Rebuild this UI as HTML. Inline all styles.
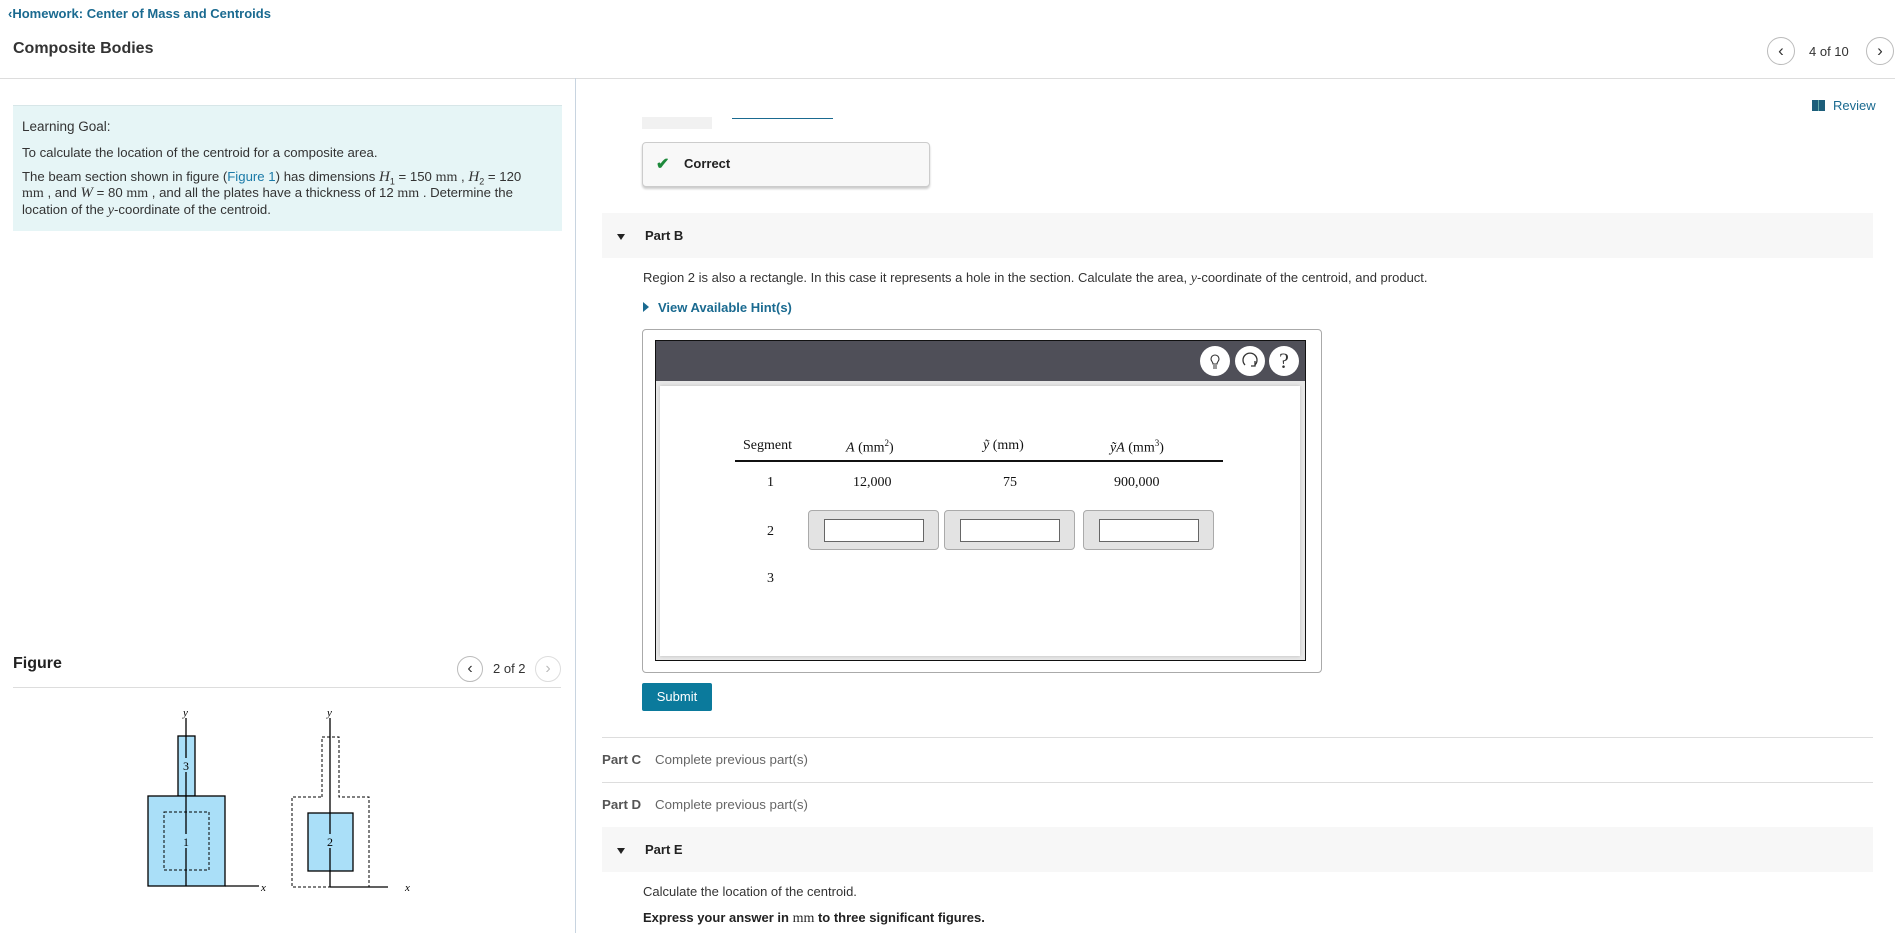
<!DOCTYPE html>
<html><head><meta charset="utf-8"><style>
*{margin:0;padding:0;box-sizing:border-box}
body{width:1895px;height:933px;position:relative;overflow:hidden;background:#fff;font-family:"Liberation Sans",Arial,sans-serif;font-size:13px;color:#333}
.a{position:absolute;white-space:nowrap}
.m{font-family:"Liberation Serif",serif;font-style:italic}
.mr{font-family:"Liberation Serif",serif}
.circ{position:absolute;border:1px solid #bbb;border-radius:50%;background:#fff;color:#333;text-align:center}
.bar{position:absolute;left:602px;width:1271px;height:45px;background:#f7f7f7}
.tri{position:absolute;width:0;height:0;border-left:4px solid transparent;border-right:4px solid transparent;border-top:6px solid #222}
.hr{position:absolute;height:1px;background:#ddd}
.tb{position:absolute;font-family:"Liberation Serif",serif;font-size:14px;color:#111}
.ib{position:absolute;top:510px;width:131px;height:40px;background:#e3e3e3;border:1px solid #aaa;border-radius:4px}
.ib i{position:absolute;left:15px;top:8px;width:100px;height:23px;background:#fff;border:1px solid #666}
</style></head><body>

<div class="a" style="left:8px;top:6px;font-size:13px;font-weight:bold;color:#1a6a90">&#x2039;Homework: Center of Mass and Centroids</div>
<div class="a" style="left:13px;top:40px;font-size:16px;font-weight:bold;color:#333">Composite Bodies</div>

<div class="circ" style="left:1767px;top:37px;width:28px;height:28px;line-height:25px;font-size:17px">&#x2039;</div>
<div class="a" style="left:1809px;top:44px;font-size:13px">4 of 10</div>
<div class="circ" style="left:1866px;top:37px;width:28px;height:28px;line-height:25px;font-size:17px">&#x203A;</div>
<div class="hr" style="left:0;top:78px;width:1895px"></div>
<div style="position:absolute;left:575px;top:78px;width:1px;height:855px;background:#c8d4e0"></div>

<!-- learning goal -->
<div style="position:absolute;left:13px;top:105px;width:549px;height:126px;background:#e6f5f6;border-top:1px solid #d7e6e8"></div>
<div class="a" style="left:22px;top:119px;font-size:13.5px">Learning Goal:</div>
<div class="a" style="left:22px;top:145px;font-size:13.2px">To calculate the location of the centroid for a composite area.</div>
<div class="a" style="left:22px;top:169px;font-size:13.2px">The beam section shown in figure (<span style="color:#1a7aa8">Figure 1</span>) has dimensions <span class="m" style="font-size:15px">H</span><sub style="font-size:9px">1</sub> = 150 <span class="mr" style="font-size:14px">mm</span> , <span class="m" style="font-size:15px">H</span><sub style="font-size:9px">2</sub> = 120</div>
<div class="a" style="left:22px;top:185px;font-size:13.2px"><span class="mr" style="font-size:14px">mm</span> , and <span class="m" style="font-size:15px">W</span> = 80 <span class="mr" style="font-size:14px">mm</span> , and all the plates have a thickness of 12 <span class="mr" style="font-size:14px">mm</span> . Determine the</div>
<div class="a" style="left:22px;top:202px;font-size:13.2px">location of the <span class="m" style="font-size:14px">y</span>-coordinate of the centroid.</div>

<!-- figure -->
<div class="a" style="left:13px;top:655px;font-size:16px;font-weight:bold;color:#222">Figure</div>
<div class="circ" style="left:457px;top:656px;width:26px;height:26px;line-height:23px;font-size:16px">&#x2039;</div>
<div class="a" style="left:493px;top:661px;font-size:13px">2 of 2</div>
<div class="circ" style="left:535px;top:656px;width:26px;height:26px;line-height:23px;font-size:16px;color:#bbb;border-color:#ddd">&#x203A;</div>
<div class="hr" style="left:13px;top:687px;width:548px"></div>
<svg style="position:absolute;left:0;top:700px" width="450" height="200" viewBox="0 700 450 200">
 <g stroke="#000" stroke-width="1.3" fill="#aadff8">
  <rect x="178" y="736" width="17" height="60"/>
  <rect x="148" y="796" width="77" height="90"/>
  <rect x="308" y="813" width="45" height="58"/>
 </g>
 <g stroke="#000" stroke-width="1" fill="none" stroke-dasharray="3,2">
  <rect x="164" y="812" width="45" height="58"/>
  <path d="M322 797 V737 H339 V797 H369 V887 H292 V797 Z"/>
 </g>
 <g stroke="#000" stroke-width="1.3">
  <line x1="186" y1="718" x2="186" y2="886"/>
  <line x1="225" y1="886" x2="259" y2="886"/>
  <line x1="330" y1="718" x2="330" y2="887"/>
  <line x1="330" y1="887" x2="388" y2="887"/>
 </g>
 <g fill="#aadff8">
  <rect x="181" y="758" width="10" height="14"/>
  <rect x="181" y="834" width="10" height="14"/>
  <rect x="325" y="834" width="10" height="14"/>
 </g>
 <g font-family="Liberation Serif,serif" font-size="12" fill="#000">
  <text x="183" y="716" font-style="italic" font-size="11">y</text>
  <text x="327" y="716" font-style="italic" font-size="11">y</text>
  <text x="261" y="891" font-style="italic" font-size="11">x</text>
  <text x="405" y="891" font-style="italic" font-size="11">x</text>
  <text x="183" y="770">3</text>
  <text x="183" y="846">1</text>
  <text x="327" y="846">2</text>
 </g>
</svg>

<!-- right -->
<div class="a" style="left:1812px;top:100px;width:13px;height:11px;background:#1d5e7a;border-left:6px solid #1d5e7a;box-shadow:inset 1px 0 0 #6aa"></div>
<div class="a" style="left:1833px;top:98px;color:#1a6a90">Review</div>

<div style="position:absolute;left:642px;top:117px;width:70px;height:12px;background:#f1f1f1"></div>
<div style="position:absolute;left:732px;top:118px;width:101px;height:1px;background:#1a6a90"></div>
<div style="position:absolute;left:642px;top:142px;width:288px;height:45px;background:#f8f8f8;border:1px solid #ccc;border-radius:4px;box-shadow:0 2px 2px #ccc"></div>
<div class="a" style="left:656px;top:154px;color:#1e8a3c;font-size:16px;font-weight:bold">&#x2714;</div>
<div class="a" style="left:684px;top:156px;font-weight:bold;color:#222">Correct</div>

<div class="bar" style="top:213px"></div>
<div class="tri" style="left:617px;top:234px"></div>
<div class="a" style="left:645px;top:228px;font-weight:bold;color:#222">Part B</div>
<div class="a" style="left:643px;top:270px;font-size:13px">Region 2 is also a rectangle. In this case it represents a hole in the section. Calculate the area, <span class="m" style="font-size:14px">y</span>-coordinate of the centroid, and product.</div>
<div class="a" style="left:643px;top:302px;width:0;height:0;border-top:5px solid transparent;border-bottom:5px solid transparent;border-left:6px solid #1a6a90"></div>
<div class="a" style="left:658px;top:300px;font-weight:bold;color:#1a6a90">View Available Hint(s)</div>

<!-- applet -->
<div style="position:absolute;left:642px;top:329px;width:680px;height:344px;border:1px solid #aaa;border-radius:4px;background:#fff"></div>
<div style="position:absolute;left:655px;top:340px;width:651px;height:321px;border:1.5px solid #111;background:#e6e6e6"></div>
<div style="position:absolute;left:656px;top:341px;width:649px;height:40px;background:#4f4f58"></div>
<div style="position:absolute;left:660px;top:386px;width:640px;height:270px;background:#fff;box-shadow:0 0 3px #bbb"></div>
<div class="circ" style="left:1235px;top:346px;width:30px;height:30px;border:none"><svg width="30" height="30"><path d="M10 19 A7 7 0 1 1 20 19" fill="none" stroke="#333" stroke-width="1.3"/><path d="M20 15 l0 5 l-4 0" fill="none" stroke="#333" stroke-width="1.3"/></svg></div>
<div class="circ" style="left:1269px;top:346px;width:30px;height:30px;border:none;font-size:22px;line-height:30px;font-family:'Liberation Serif',serif">?</div>
<div class="circ" style="left:1200px;top:346px;width:30px;height:30px;border:none;background:#fff"><svg width="30" height="30"><path d="M11 13 a4 4 0 1 1 8 0 c0 2-2 3-2 5 h-4 c0-2-2-3-2-5z M13 20 h4 M13 22 h4" fill="none" stroke="#333" stroke-width="1.1"/></svg></div>

<div class="tb" style="left:743px;top:438px">Segment</div>
<div class="tb" style="left:846px;top:438px"><i>A</i> (mm<sup style="font-size:9px">2</sup>)</div>
<div class="tb" style="left:983px;top:438px"><i>ỹ</i> (mm)</div>
<div class="tb" style="left:1110px;top:438px"><i>ỹA</i> (mm<sup style="font-size:9px">3</sup>)</div>
<div style="position:absolute;left:735px;top:460px;width:488px;height:1.5px;background:#111"></div>
<div class="tb" style="left:767px;top:475px">1</div>
<div class="tb" style="left:853px;top:475px">12,000</div>
<div class="tb" style="left:1003px;top:475px">75</div>
<div class="tb" style="left:1114px;top:475px">900,000</div>
<div class="tb" style="left:767px;top:524px">2</div>
<div class="tb" style="left:767px;top:571px">3</div>
<div class="ib" style="left:808px"><i></i></div>
<div class="ib" style="left:944px"><i></i></div>
<div class="ib" style="left:1083px"><i></i></div>

<div style="position:absolute;left:642px;top:683px;width:70px;height:28px;background:#0b7a9c;border-radius:2px;color:#fff;text-align:center;line-height:28px">Submit</div>

<div class="hr" style="left:602px;top:737px;width:1271px"></div>
<div class="a" style="left:602px;top:752px;font-weight:bold;color:#555;font-size:13.3px">Part C</div>
<div class="a" style="left:655px;top:752px;color:#666;font-size:13.3px">Complete previous part(s)</div>
<div class="hr" style="left:602px;top:782px;width:1271px"></div>
<div class="a" style="left:602px;top:797px;font-weight:bold;color:#555;font-size:13.3px">Part D</div>
<div class="a" style="left:655px;top:797px;color:#666;font-size:13.3px">Complete previous part(s)</div>
<div class="bar" style="top:827px"></div>
<div class="tri" style="left:617px;top:848px"></div>
<div class="a" style="left:645px;top:842px;font-weight:bold;color:#222">Part E</div>
<div class="a" style="left:643px;top:884px;font-size:13px">Calculate the location of the centroid.</div>
<div class="a" style="left:643px;top:910px;font-size:13px;font-weight:bold;color:#222">Express your answer in <span class="mr" style="font-weight:normal;font-size:14px">mm</span> to three significant figures.</div>
</body></html>
